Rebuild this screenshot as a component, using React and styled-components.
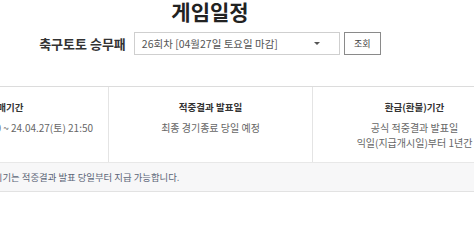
import React from "react";
import styled, { createGlobalStyle } from "styled-components";

const GlobalStyle = createGlobalStyle`
  html, body {
    margin: 0;
    padding: 0;
    background: #fff;
  }
  body {
    font-family: "Noto Sans CJK KR", "Noto Sans", sans-serif;
    color: #333;
  }
`;

const columns = [
  { title: "발매기간", lines: ["24.04.22(월) 09:00 ~ 24.04.27(토) 21:50"] },
  { title: "적중결과 발표일", lines: ["최종 경기종료 당일 예정"] },
  { title: "환급(환불)기간", lines: ["공식 적중결과 발표일", "익일(지급개시일)부터 1년간"] },
];

function App() {
  return (
    <Page>
      <GlobalStyle />
      <Wrapper>
        <Title>게임일정</Title>
        <SearchRow>
          <GameName>축구토토 승무패</GameName>
          <SelectBox>
            <span>26회차 [04월27일 토요일 마감]</span>
            <Arrow />
          </SelectBox>
          <SearchButton>조회</SearchButton>
        </SearchRow>
        <ScheduleTable>
          {columns.map((col) => (
            <Cell key={col.title}>
              <CellTitle>{col.title}</CellTitle>
              {col.lines.map((line) => (
                <CellText key={line}>{line}</CellText>
              ))}
            </Cell>
          ))}
        </ScheduleTable>
        <Notice>※ 적중금 지급 시기는 적중결과 발표 당일부터 지급 가능합니다.</Notice>
      </Wrapper>
    </Page>
  );
}

export default App;

const Page = styled.div`
  width: 474px;
  height: 248px;
  overflow: hidden;
  background: #fff;
`;

const Wrapper = styled.div`
  width: 612px;
  margin-left: -96px;
  display: flex;
  flex-direction: column;
  align-items: center;
`;

const Title = styled.h1`
  margin: 0;
  font-size: 21px;
  line-height: 23px;
  font-weight: 700;
  color: #222;
`;

const SearchRow = styled.div`
  margin-top: 9px;
  display: flex;
  align-items: center;
  height: 23px;
`;

const GameName = styled.span`
  font-size: 13px;
  font-weight: 700;
  color: #333;
  margin-right: 8px;
`;

const SelectBox = styled.div`
  box-sizing: border-box;
  width: 206px;
  height: 23px;
  border: 1px solid #cfcfcf;
  background: #fff;
  display: flex;
  align-items: center;
  justify-content: space-between;
  padding: 0 19px 0 7px;
  font-size: 10.5px;
  color: #555;
  margin-right: 4px;
`;

const Arrow = styled.span`
  width: 0;
  height: 0;
  border-left: 3px solid transparent;
  border-right: 3px solid transparent;
  border-top: 3px solid #555;
`;

const SearchButton = styled.button`
  box-sizing: border-box;
  width: 37px;
  height: 23px;
  padding: 0;
  border: 1px solid #8a8a8a;
  background: #fff;
  font-family: "Noto Sans CJK KR", "Noto Sans", sans-serif;
  font-size: 9px;
  color: #444;
`;

const ScheduleTable = styled.div`
  margin-top: 31px;
  width: 100%;
  display: grid;
  grid-template-columns: repeat(3, 1fr);
  border-top: 1px solid #dcdcdc;
`;

const Cell = styled.div`
  display: flex;
  flex-direction: column;
  align-items: center;
  padding: 13px 0 12px;
  & + & {
    border-left: 1px solid #e4e4e4;
  }
`;

const CellTitle = styled.div`
  font-size: 9.5px;
  line-height: 14px;
  font-weight: 700;
  color: #333;
  margin-bottom: 6px;
`;

const CellText = styled.div`
  font-size: 10px;
  line-height: 15px;
  color: #666;
  white-space: nowrap;
`;

const Notice = styled.div`
  box-sizing: border-box;
  width: 100%;
  height: 30px;
  padding: 0 31px;
  display: flex;
  align-items: center;
  background: #f7f7f8;
  border-top: 1px solid #e8e8e8;
  border-bottom: 1px solid #e2e2e2;
  font-size: 9.4px;
  color: #5b6577;
`;
